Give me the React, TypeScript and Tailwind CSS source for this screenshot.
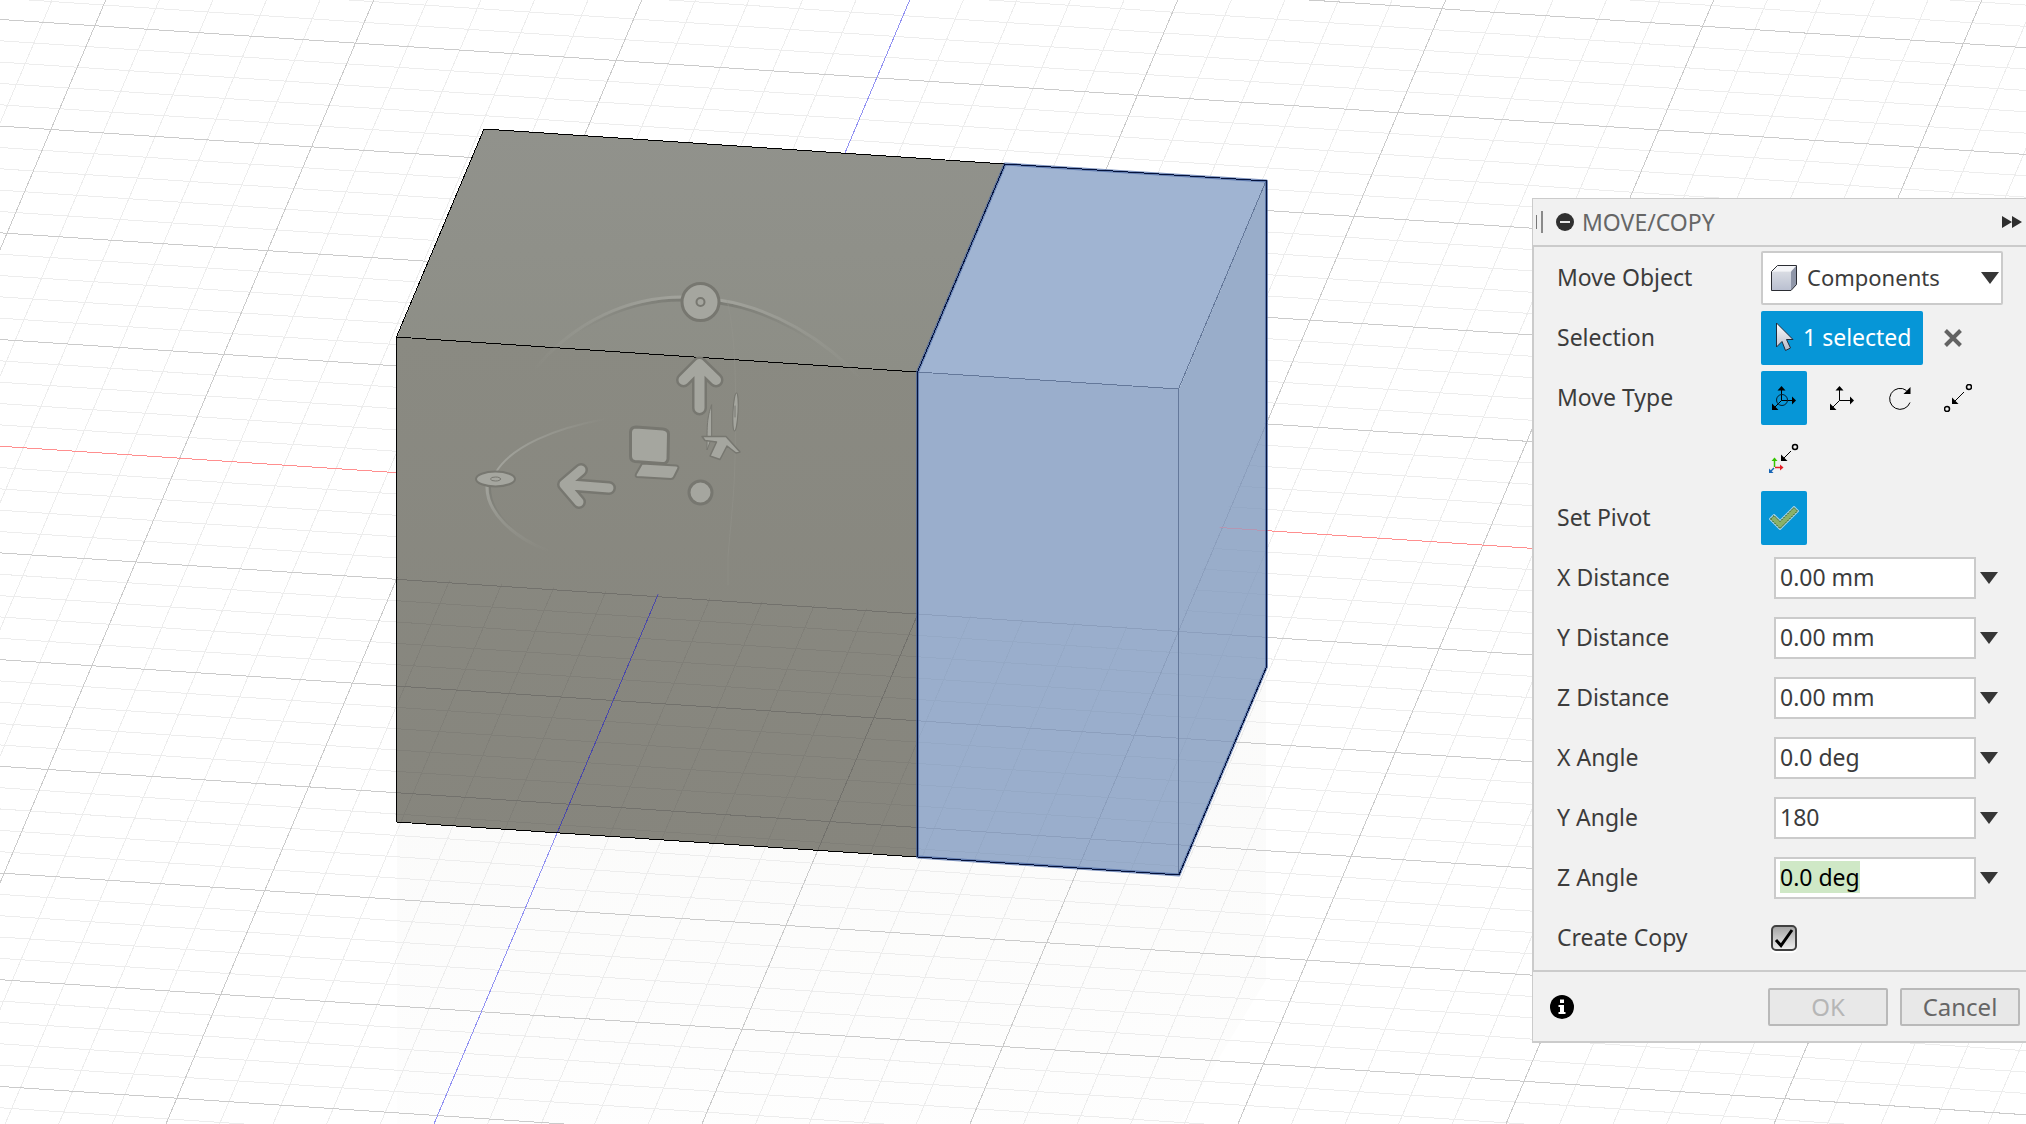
import { clsx } from 'clsx';
import { useEffect, useRef, useState } from 'react';
import type { ReactElement, ReactNode } from 'react';

const VIEW_WIDTH = 2026;
const VIEW_HEIGHT = 1124;

// ground plane: both line families keep a constant direction on screen
const X_LINE_SLOPE = 1 / 15;
const X_LINE_ORIGIN = 446.2;
const X_LINE_STEP = 21.34;
const Y_LINE_SLOPE = -0.4233;
const Y_LINE_ORIGIN = 909.7;
const Y_LINE_STEP = 53.6;

const range = (from: number, to: number): number[] =>
	Array.from({ length: to - from + 1 }, (_, index) => from + index);

const xLinePath = (index: number): string => {
	const y = X_LINE_ORIGIN + index * X_LINE_STEP;
	return `M0 ${y}L${VIEW_WIDTH} ${y + VIEW_WIDTH * X_LINE_SLOPE}`;
};

const yLinePath = (index: number): string => {
	const x = Y_LINE_ORIGIN + index * Y_LINE_STEP;
	return `M${x} 0L${x + VIEW_HEIGHT * Y_LINE_SLOPE} ${VIEW_HEIGHT}`;
};

const X_LINES = range(-28, 32);
const Y_LINES = range(-18, 32);

const gridPath = (isMajor: boolean): string =>
	[
		...X_LINES.filter((i) => i !== 0 && (i % 5 === 0) === isMajor).map(
			xLinePath
		),
		...Y_LINES.filter((i) => i !== 0 && (i % 5 === 0) === isMajor).map(
			yLinePath
		),
	].join('');

const MINOR_GRID = gridPath(false);
const MAJOR_GRID = gridPath(true);

const Manipulator = (): ReactElement => (
	<g strokeLinecap="round" strokeLinejoin="round">
		<g fill="none">
			<path
				d="M533 373C575 322 630 300 682 300"
				stroke="url(#arcLeftDark)"
				strokeWidth="3"
			/>
			<path
				d="M533 371C575 320 630 297 682 297"
				stroke="url(#arcLeft)"
				strokeWidth="3"
			/>
			<path
				d="M719 303C770 310 822 340 860 380"
				stroke="url(#arcRightDark)"
				strokeWidth="3"
			/>
			<path
				d="M719 300C772 308 825 339 862 380"
				stroke="url(#arcRight)"
				strokeWidth="3"
			/>
			<path
				d="M606 419C555 428 512 446 496 472"
				stroke="url(#arcSide)"
				strokeWidth="2"
			/>
			<path
				d="M490 486C489 512 515 537 550 551"
				stroke="url(#arcLowerDark)"
				strokeWidth="2"
			/>
			<path
				d="M487 486C486 512 513 537 548 551"
				stroke="url(#arcLower)"
				strokeWidth="3"
			/>
			<path
				d="M727 300C737 340 736 400 735 460C734 500 730 530 728 557V585"
				stroke="#96968f"
				strokeOpacity=".4"
				strokeWidth="1"
			/>
		</g>

		<g fill="#a5a69f" stroke="#777770" strokeWidth="3">
			<circle cx="700.5" cy="302" r="18.5" />
			<circle cx="700.5" cy="302" r="4" strokeWidth="2" />
			<ellipse cx="495.5" cy="479" rx="19.5" ry="7.5" strokeWidth="2" />
			<ellipse cx="495.5" cy="479" rx="5" ry="2" strokeWidth="1" />
			<circle cx="700.5" cy="492.5" r="11.5" />
			<ellipse
				cx="735.5"
				cy="412"
				rx="2.5"
				ry="19"
				strokeWidth="1"
				transform="rotate(3 735.5 412)"
			/>
			<path d="M735 406V417" strokeWidth="1" />
			<path
				d="M711.5 405C707 418 707 424 707 450L711.5 438Z"
				strokeWidth="1"
			/>
			<path
				d="M702 436.5L726 436.5L740 452L736 453L727 446L720 459.5L710 456L716.5 442L705 440.5Z"
				strokeWidth="1.5"
			/>
			<path
				d="M642 463.5L676 465.5Q679.5 466 678 469L674 477Q673 479 671 479L637 477Q635 476.5 636 474Z"
				strokeWidth="2"
			/>
			<path
				d="M636 427L663 429Q668.5 430 668.5 434L668 459Q667 464 662 463.5L635 461.5Q630.5 461 630.5 456V432Q631 427 636 427Z"
				strokeWidth="3"
			/>
		</g>

		<g fill="none">
			<path
				d="M699.5 408V364M683.5 380L699.5 364L716 380"
				stroke="#777770"
				strokeWidth="15"
			/>
			<path
				d="M699.5 408V364M683.5 380L699.5 364L716 380"
				stroke="#a5a69f"
				strokeWidth="10"
			/>
			<path
				d="M609 488L564 484.5M581 470L564 484.5L579 502"
				stroke="#777770"
				strokeWidth="14"
			/>
			<path
				d="M609 488L564 484.5M581 470L564 484.5L579 502"
				stroke="#a5a69f"
				strokeWidth="9"
			/>
		</g>
	</g>
);

const Viewport = (): ReactElement => (
	<svg
		className="absolute inset-0 h-full w-full"
		viewBox={`0 0 ${VIEW_WIDTH} ${VIEW_HEIGHT}`}
		preserveAspectRatio="xMinYMin slice"
		aria-label="3D viewport"
		role="img"
	>
		<defs>
			<linearGradient id="ground" x1="0" y1="0" x2="0" y2="1">
				<stop offset=".3" stopColor="#f8f8f7" />
				<stop offset="1" stopColor="#f8f8f7" stopOpacity=".3" />
			</linearGradient>
			<linearGradient id="arcLeft">
				<stop offset="0" stopColor="#a2a39c" stopOpacity="0" />
				<stop offset="1" stopColor="#a2a39c" />
			</linearGradient>
			<linearGradient id="arcLeftDark">
				<stop offset=".3" stopColor="#7b7c75" stopOpacity="0" />
				<stop offset="1" stopColor="#7b7c75" />
			</linearGradient>
			<linearGradient id="arcRight">
				<stop offset="0" stopColor="#a2a39c" />
				<stop offset="1" stopColor="#a2a39c" stopOpacity="0" />
			</linearGradient>
			<linearGradient id="arcRightDark">
				<stop offset="0" stopColor="#7b7c75" />
				<stop offset=".7" stopColor="#7b7c75" stopOpacity="0" />
			</linearGradient>
			<linearGradient id="arcSide">
				<stop offset="0" stopColor="#a2a39c" />
				<stop offset="1" stopColor="#a2a39c" stopOpacity="0" />
			</linearGradient>
			<linearGradient id="arcLower" x1="0" y1="0" x2="0" y2="1">
				<stop offset="0" stopColor="#a2a39c" />
				<stop offset="1" stopColor="#a2a39c" stopOpacity="0" />
			</linearGradient>
			<linearGradient id="arcLowerDark" x1="0" y1="0" x2="0" y2="1">
				<stop offset="0" stopColor="#7b7c75" />
				<stop offset=".7" stopColor="#7b7c75" stopOpacity="0" />
			</linearGradient>
			<linearGradient id="greyTop" x1="0" y1="0" x2="0" y2="1">
				<stop offset="0" stopColor="#91928c" />
				<stop offset="1" stopColor="#8d8e86" />
			</linearGradient>
			<linearGradient id="greyFront" x1="0" y1="0" x2="0" y2="1">
				<stop offset="0" stopColor="#8a8a82" />
				<stop offset="1" stopColor="#86857d" />
			</linearGradient>
			{/* the part of the ground plane that shows through the body */}
			<clipPath id="throughGrey">
				<path d="M397 577L917 612V857L397 822Z" />
			</clipPath>
			<clipPath id="throughBlue">
				<path d="M917 612L1176 629L1266 420V667L1179 875L917 857Z" />
			</clipPath>
		</defs>

		<rect width={VIEW_WIDTH} height={VIEW_HEIGHT} fill="#fff" />
		<path
			d="M397 822L1179 875L1266 667V980L1179 1124H397Z"
			fill="url(#ground)"
			fillOpacity=".6"
		/>
		<g fill="none" shapeRendering="crispEdges">
			<path d={MINOR_GRID} stroke="#ededed" />
			<path d={MAJOR_GRID} stroke="#cbcbcb" />
			<path d={xLinePath(0)} stroke="#ff8f8f" />
			<path d={yLinePath(0)} stroke="#9292f2" />
		</g>

		<path d="M484 129L1005 164L917 372L397 337Z" fill="url(#greyTop)" />
		<path d="M397 337L917 372V857L397 822Z" fill="url(#greyFront)" />
		<path d="M1005 164L1266 181L1179 389L917 372Z" fill="#a0b4d2" />
		<path d="M917 372L1179 389V875L917 857Z" fill="#9aaecc" />
		<path d="M1179 389L1266 181V667L1179 875Z" fill="#99adca" />

		<g fill="none" shapeRendering="crispEdges" clipPath="url(#throughGrey)">
			<path d={MINOR_GRID} stroke="#807f78" />
			<path d={MAJOR_GRID} stroke="#72716c" />
			<path d={yLinePath(0)} stroke="#4a48aa" />
		</g>
		<g fill="none" shapeRendering="crispEdges" clipPath="url(#throughBlue)">
			<path d={MINOR_GRID} stroke="#95a9c6" />
			<path d={MAJOR_GRID} stroke="#8c9fbd" />
			<path d={xLinePath(0)} stroke="#b596b2" />
		</g>

		<g fill="none" shapeRendering="crispEdges">
			<path
				d="M1005 164L484 129L396.5 337V822L917 857M396.5 337L917 372"
				stroke="#000"
			/>
			<path
				d="M917 372L1178.5 389V875M1178.5 389L1266 181"
				stroke="#64789a"
			/>
		</g>
		<g fill="none" strokeLinejoin="round">
			<path
				d="M1005 164L1266.5 181V667L1179 875L917.5 857V372Z"
				stroke="#4562a0"
				strokeOpacity=".7"
				strokeWidth="3"
			/>
			<path
				d="M1005 164L1266.5 181V667L1179 875L917.5 857V372Z"
				stroke="#05133c"
				shapeRendering="crispEdges"
			/>
		</g>

		<Manipulator />
	</svg>
);

const ArrowDown = (): ReactElement => (
	<svg className="h-3 w-[18px]" viewBox="0 0 18 12" aria-hidden="true">
		<path d="M0 0H18L9 12Z" fill="#363636" />
	</svg>
);

const ComponentIcon = (): ReactElement => (
	<svg className="size-[26px]" viewBox="0 0 26 26" aria-hidden="true">
		<defs>
			<linearGradient id="cube" x1="0" y1="0" x2="0" y2="1">
				<stop offset="0" stopColor="#d9dce3" />
				<stop offset="1" stopColor="#b9bfd0" />
			</linearGradient>
		</defs>
		<path d="M.5 6.5L6.5 .5H25.5L20 6.5Z" fill="#f4f5f8" />
		<path d="M20 6.5L25.5 .5V19.5L20 25.5Z" fill="#8f96a8" />
		<path d="M.5 6.5H20V25.5H.5Z" fill="url(#cube)" />
		<path
			d="M.5 6.5L6.5 .5H25.5V19.5L20 25.5H.5Z"
			fill="none"
			stroke="#2b2d33"
			strokeLinejoin="round"
		/>
	</svg>
);

const CursorIcon = (): ReactElement => (
	<svg className="h-[30px] w-5" viewBox="0 0 20 30" aria-hidden="true">
		<defs>
			<linearGradient id="cursor" x1="0" y1="0" x2="0" y2="1">
				<stop offset="0" stopColor="#fff" />
				<stop offset="1" stopColor="#b4b9c9" />
			</linearGradient>
		</defs>
		<path
			d="M1.5 1L18 17.5H11.5L15.5 26L10.5 28.5L7 19.5L1.5 25Z"
			fill="url(#cursor)"
			stroke="#1f2c3c"
			strokeLinejoin="round"
		/>
	</svg>
);

const Triad = ({ hasCircle }: { hasCircle?: boolean }): ReactElement => (
	<svg className="size-6" viewBox="0 0 24 24" aria-hidden="true">
		<path
			d="M9.5 3V14.5H21M9.5 14.5L2 22"
			fill="none"
			stroke="#000"
		/>
		<path d="M9.5 0L13.5 4.5H5.5ZM24 14.5L20 18.5V10.5ZM0 24V17.5L6.5 24Z" />
		{hasCircle === true && (
			<circle cx="10" cy="14" r="5.5" fill="none" stroke="#06202f" />
		)}
	</svg>
);

const RotateIcon = (): ReactElement => (
	<svg className="size-6" viewBox="0 0 24 24" aria-hidden="true">
		<path
			d="M22 16.5A10.5 10.5 0 1 1 18.5 4.5"
			fill="none"
			stroke="#000"
		/>
		<path d="M22.500 1V8H15.500Z" />
	</svg>
);

const PointToPointIcon = (): ReactElement => (
	<svg className="size-7" viewBox="0 0 28 28" aria-hidden="true">
		<g fill="none" stroke="#000">
			<circle cx="25" cy="3" r="2.5" strokeWidth="1.5" />
			<circle cx="3" cy="25" r="2.5" strokeWidth="1.5" />
			<path d="M20 8L11 17" />
		</g>
		<path d="M8 20V13.5L14.5 20Z" />
	</svg>
);

const PointToPositionIcon = (): ReactElement => (
	<svg className="size-[30px]" viewBox="0 0 30 30" aria-hidden="true">
		<circle
			cx="26"
			cy="4"
			r="2.5"
			fill="none"
			stroke="#000"
			strokeWidth="1.5"
		/>
		<path d="M22 8L15 15" stroke="#000" />
		<path d="M12 18V11.5L18.5 18Z" />
		<path d="M5.5 24V17" stroke="#35c400" strokeWidth="1.5" />
		<path d="M5.5 14.5L8.500 18H2.5Z" fill="#35c400" />
		<path d="M6 24.500H12" stroke="#e41e26" strokeWidth="1.5" />
		<path d="M14.5 24.500L11 27.500V21.500Z" fill="#e41e26" />
		<path d="M5 25L2 28" stroke="#1664b4" strokeWidth="1.5" />
		<path d="M0 30V25.5L4.5 30Z" fill="#1664b4" />
	</svg>
);

const PivotCheckIcon = (): ReactElement => (
	<svg className="h-6 w-[30px]" viewBox="0 0 30 24" aria-hidden="true">
		<path
			d="M1 13L5 9L11 15L25 1L29 5L11 23Z"
			fill="#83ad62"
			stroke="#a9d3e8"
			strokeWidth="2"
			strokeLinejoin="round"
		/>
		<path
			d="M1.5 13L5 9.5L11 15.5L25 1.5L28.5 5L11 22.5Z"
			fill="#8bb069"
			stroke="#1f5a1a"
			strokeDasharray="2 1"
		/>
	</svg>
);

const MOVE_TYPES: { name: string; icon: ReactNode }[] = [
	{ name: 'Free Move', icon: <Triad hasCircle /> },
	{ name: 'Translate', icon: <Triad /> },
	{ name: 'Rotate', icon: <RotateIcon /> },
	{ name: 'Point to Point', icon: <PointToPointIcon /> },
	{ name: 'Point to Position', icon: <PointToPositionIcon /> },
];

const DIMENSIONS = [
	{ id: 'x-distance', label: 'X Distance', value: '0.00 mm' },
	{ id: 'y-distance', label: 'Y Distance', value: '0.00 mm' },
	{ id: 'z-distance', label: 'Z Distance', value: '0.00 mm' },
	{ id: 'x-angle', label: 'X Angle', value: '0.0 deg' },
	{ id: 'y-angle', label: 'Y Angle', value: '180' },
	{ id: 'z-angle', label: 'Z Angle', value: '0.0 deg' },
];

const Row = ({
	label,
	htmlFor,
	children,
}: {
	label: string;
	htmlFor?: string;
	children: ReactNode;
}): ReactElement => (
	<div className="flex items-start">
		{htmlFor === undefined ? (
			<span className="w-[204px] shrink-0 leading-[58px]">{label}</span>
		) : (
			<label htmlFor={htmlFor} className="w-[204px] shrink-0 leading-[58px]">
				{label}
			</label>
		)}
		<div className="flex min-h-[60px] items-center">{children}</div>
	</div>
);

const DimensionInput = ({
	id,
	label,
	defaultValue,
	isActive,
}: {
	id: string;
	label: string;
	defaultValue: string;
	isActive: boolean;
}): ReactElement => {
	const input = useRef<HTMLInputElement>(null);

	useEffect(() => {
		if (!isActive) return;
		input.current?.focus();
		input.current?.select();
	}, [isActive]);

	return (
		<div className="ml-[13px] flex items-center gap-1">
			<input
				ref={input}
				id={id}
				type="text"
				defaultValue={defaultValue}
				className="h-[42px] w-[202px] border-2 border-[#cbcbcb] bg-white px-1 pb-0.5 leading-[26px] outline-none selection:bg-[#cfe8c6] selection:text-black"
			/>
			<button type="button" aria-label={`${label} options`}>
				<ArrowDown />
			</button>
		</div>
	);
};

const MoveCopyPanel = (): ReactElement => {
	const [moveType, setMoveType] = useState('Free Move');

	return (
		<section className="relative w-[494px] bg-[#f1f1f1] font-['Noto_Sans','Open_Sans',sans-serif] text-[23px] text-[#3c3c3c]">
			<header className="flex h-[49px] items-center border-t border-b-2 border-l border-[#cbcbcb] pr-1 pl-[3px]">
				<div className="flex items-center gap-1" aria-hidden="true">
					<span className="h-[14px] w-px bg-[#777]" />
					<span className="h-[22px] w-0.5 bg-[#8a8a8a]" />
				</div>
				<button
					type="button"
					aria-label="Collapse"
					className="ml-[13px] flex size-[18px] items-center justify-center rounded-full bg-[#303030]"
				>
					<span className="h-0.5 w-2.5 bg-[#e8e8e8]" />
				</button>
				<h2 className="ml-2 grow text-[#666]">MOVE/COPY</h2>
				<button type="button" aria-label="Expand">
					<svg className="h-3 w-5" viewBox="0 0 20 12" aria-hidden="true">
						<path d="M0 0L10 6V0L20 6L10 12V6L0 12Z" fill="#2e2e2e" />
					</svg>
				</button>
			</header>

			<div className="border-l-2 border-[#cbcbcb] pt-px pb-0.5 pl-[23px]">
				<Row label="Move Object" htmlFor="move-object">
					<div className="relative">
						<select
							id="move-object"
							className="h-[54px] w-[242px] appearance-none rounded-xs border-2 border-[#cbcbcb] bg-white pb-0.5 pl-11 text-[22px] outline-none"
						>
							<option>Components</option>
							<option>Bodies</option>
							<option>Faces</option>
							<option>Sketch Objects</option>
						</select>
						<span className="pointer-events-none absolute inset-y-0 left-2.5 flex items-center">
							<ComponentIcon />
						</span>
						<span className="pointer-events-none absolute inset-y-0 right-1 flex items-center">
							<ArrowDown />
						</span>
					</div>
				</Row>

				<Row label="Selection">
					<button
						type="button"
						className="flex h-[54px] w-[162px] items-center gap-2 rounded-xs bg-[#0696d7] pb-0.5 pl-3.5 text-[23px] whitespace-nowrap text-white"
					>
						<CursorIcon />
						<span>1 selected</span>
					</button>
					<button type="button" aria-label="Clear selection" className="ml-5">
						<svg className="size-5" viewBox="0 0 20 20" aria-hidden="true">
							<path
								d="M2.5 2.5L17.5 17.5M17.5 2.5L2.5 17.5"
								stroke="#636363"
								strokeWidth="4"
							/>
						</svg>
					</button>
				</Row>

				<Row label="Move Type">
					<div className="flex w-[242px] flex-wrap gap-x-3 gap-y-1.5 py-[3px]">
						{MOVE_TYPES.map(({ name, icon }) => (
							<button
								key={name}
								type="button"
								aria-label={name}
								aria-pressed={name === moveType}
								onClick={() => setMoveType(name)}
								className={clsx(
									'flex h-[54px] w-[46px] items-center justify-center rounded-xs',
									name === moveType && 'bg-[#0696d7]'
								)}
							>
								{icon}
							</button>
						))}
					</div>
				</Row>

				<Row label="Set Pivot">
					<button
						type="button"
						aria-label="Set Pivot"
						className="flex h-[54px] w-[46px] items-center justify-center rounded-xs bg-[#0696d7]"
					>
						<PivotCheckIcon />
					</button>
				</Row>

				{DIMENSIONS.map(({ id, label, value }) => (
					<Row key={id} label={label} htmlFor={id}>
						<DimensionInput
							id={id}
							label={label}
							defaultValue={value}
							isActive={id === 'z-angle'}
						/>
					</Row>
				))}

				<Row label="Create Copy" htmlFor="create-copy">
					<div className="ml-2.5 grid">
						<input
							id="create-copy"
							type="checkbox"
							defaultChecked
							className="peer col-start-1 row-start-1 size-[26px] appearance-none rounded-[5px] border-2 border-[#404040] bg-linear-to-b from-[#a6a6a6] to-[#ededed] shadow-[0_2px_1px_#fff]"
						/>
						<svg
							className="pointer-events-none invisible col-start-1 row-start-1 size-[26px] peer-checked:visible"
							viewBox="0 0 26 26"
							aria-hidden="true"
						>
							<path
								d="M5 15L10 20.5L21 5"
								fill="none"
								stroke="#000"
								strokeWidth="3"
							/>
						</svg>
					</div>
				</Row>
			</div>

			<footer className="flex h-[73px] items-center gap-3 border-y-2 border-l border-[#cbcbcb] pr-1.5 pl-[17px] text-2xl">
				<button type="button" aria-label="Information" className="mr-auto">
					<svg className="size-6" viewBox="0 0 24 24" aria-hidden="true">
						<circle cx="12" cy="12" r="12" />
						<path
							d="M10 4.5H14V8H10ZM8.5 10H14V17H15.5V19H8.5V17H10V12H8.5Z"
							fill="#fff"
						/>
					</svg>
				</button>
				<button
					type="button"
					disabled
					className="h-[38px] w-[120px] rounded-xs border-2 border-[#b9b9b9] bg-[#e8e8e8] leading-8 text-[#b6b6b6]"
				>
					OK
				</button>
				<button
					type="button"
					className="h-[38px] w-[120px] rounded-xs border-2 border-[#b9b9b9] bg-[#e8e8e8] leading-8 text-[#666]"
				>
					Cancel
				</button>
			</footer>
		</section>
	);
};

const App = (): ReactElement => (
	<main className="relative flex min-h-screen items-start justify-end overflow-hidden pt-[198px]">
		<Viewport />
		<MoveCopyPanel />
	</main>
);

export default App;
